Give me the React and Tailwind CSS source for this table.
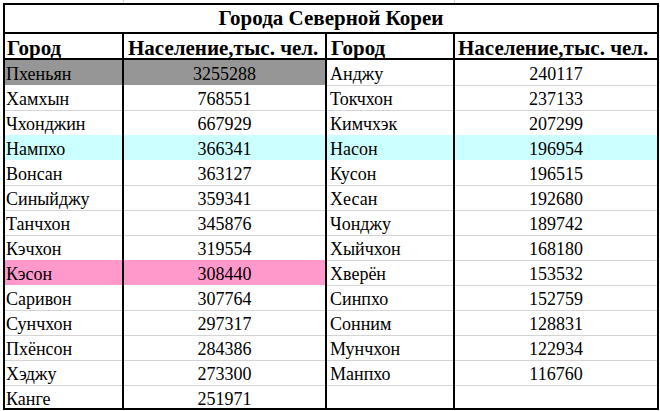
import React from "react";

const left = [
  ["Пхеньян", "3255288", "gray"],
  ["Хамхын", "768551"],
  ["Чхонджин", "667929"],
  ["Нампхо", "366341", "cyan"],
  ["Вонсан", "363127"],
  ["Синыйджу", "359341"],
  ["Танчхон", "345876"],
  ["Кэчхон", "319554"],
  ["Кэсон", "308440", "pink"],
  ["Саривон", "307764"],
  ["Сунчхон", "297317"],
  ["Пхёнсон", "284386"],
  ["Хэджу", "273300"],
  ["Канге", "251971"],
];

const right = [
  ["Анджу", "240117"],
  ["Токчхон", "237133"],
  ["Кимчхэк", "207299"],
  ["Насон", "196954", "cyan"],
  ["Кусон", "196515"],
  ["Хесан", "192680"],
  ["Чонджу", "189742"],
  ["Хыйчхон", "168180"],
  ["Хверён", "153532"],
  ["Синпхо", "152759"],
  ["Сонним", "128831"],
  ["Мунчхон", "122934"],
  ["Манпхо", "116760"],
  ["", ""],
];

const bgClass = {
  gray: "bg-[#969696]",
  cyan: "bg-[#ccffff]",
  pink: "bg-[#ff99cc]",
};

function Cell({ width, fill, plain, align, pad, children }) {
  const border = plain ? "border-transparent" : "border-[#d4d4d4]";
  const bg = fill ? bgClass[fill] : "bg-white";
  return (
    <div
      className={`${width} ${bg} ${border} ${align} ${pad} shrink-0 border-t pt-[1px] leading-[24px] whitespace-nowrap`}
    >
      {children}
    </div>
  );
}

function Divider() {
  return <div className="w-[2px] shrink-0 bg-black" />;
}

export default function App() {
  return (
    <div className="w-[660px] h-[411px] bg-white overflow-hidden text-black font-['Liberation_Serif',serif]">
      <div className="flex h-[3px]">
        <div className="ml-[123px] w-px bg-[#d4d4d4]" />
        <div className="ml-[330px] w-px bg-[#d4d4d4]" />
      </div>
      <div className="ml-[3px] w-[656px] border-2 border-black">
        <div className="h-[25px] pt-[2px] text-center text-[21px] font-bold leading-[23px] border-b-2 border-black box-content">
          Города Северной Кореи
        </div>
        <div className="flex h-[24px] text-[21px] font-bold border-b-2 border-black box-content">
          <div className="w-[117px] pl-[2px] pt-[3px] leading-[22px] whitespace-nowrap">Город</div>
          <Divider />
          <div className="w-[201px] pl-[4px] pt-[3px] leading-[22px] whitespace-nowrap">Население,тыс. чел.</div>
          <Divider />
          <div className="w-[126px] pl-[4px] pt-[3px] leading-[22px] whitespace-nowrap">Город</div>
          <Divider />
          <div className="w-[202px] pl-[3px] pt-[3px] leading-[22px] whitespace-nowrap">Население,тыс. чел.</div>
        </div>
        {left.map((l, i) => {
          const r = right[i];
          const lPrev = i > 0 ? left[i - 1][2] : "x";
          const rPrev = i > 0 ? right[i - 1][2] : "x";
          const lPlain = !!l[2] || !!lPrev;
          const rPlain = !!r[2] || !!rPrev;
          const last = i === left.length - 1;
          return (
            <div key={i} className={`flex text-[18px] ${last ? "h-[23px]" : "h-[25px]"} overflow-hidden`}>
              <Cell width="w-[117px]" fill={l[2]} plain={lPlain} align="text-left" pad="pl-[1px]">
                {l[0]}
              </Cell>
              <Divider />
              <Cell width="w-[201px]" fill={l[2]} plain={lPlain} align="text-center" pad="">
                {l[1]}
              </Cell>
              <Divider />
              <Cell width="w-[126px]" fill={r[2]} plain={rPlain} align="text-left" pad="pl-[3px]">
                {r[0]}
              </Cell>
              <Divider />
              <Cell width="w-[202px]" fill={r[2]} plain={rPlain} align="text-center" pad="">
                {r[1]}
              </Cell>
            </div>
          );
        })}
      </div>
      <div className="flex h-[3px]">
        <div className="ml-[123px] w-px bg-[#d4d4d4]" />
        <div className="ml-[330px] w-px bg-[#d4d4d4]" />
      </div>
    </div>
  );
}
